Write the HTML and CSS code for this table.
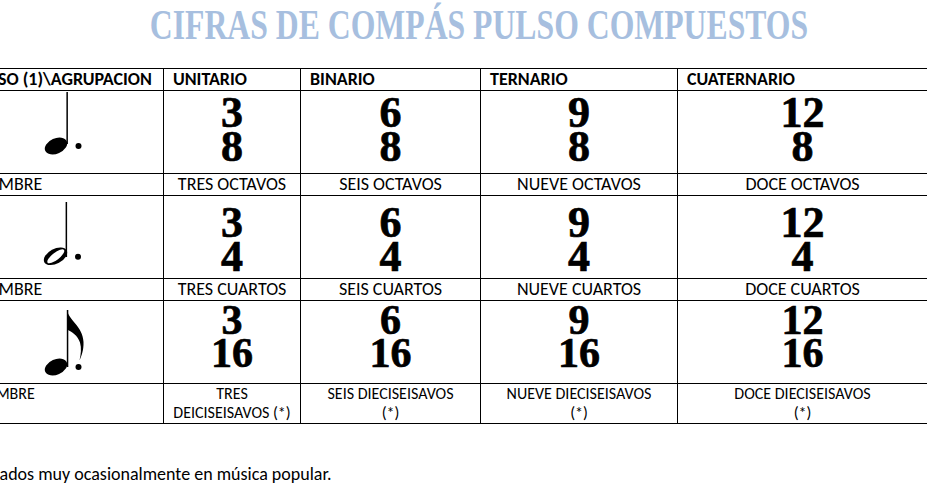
FILE: index.html
```html
<!DOCTYPE html>
<html lang="es">
<head>
<meta charset="utf-8">
<title>Cifras de compás pulso compuestos</title>
<link rel="stylesheet" href="styles.css">
</head>
<body>
<div class="title-bar"><h1 class="title">CIFRAS DE COMPÁS PULSO COMPUESTOS</h1></div>
<table class="grid">
  <colgroup>
    <col class="c1"><col class="c2"><col class="c3"><col class="c4"><col class="c5">
  </colgroup>
  <tr class="head">
    <th>PULSO (1)\AGRUPACION</th>
    <th>UNITARIO</th>
    <th>BINARIO</th>
    <th>TERNARIO</th>
    <th>CUATERNARIO</th>
  </tr>
  <tr class="pic r1">
    <td class="note">
      <svg viewBox="-35 0 198 82" width="198" height="82">
        <rect x="65.4" y="1" width="1.5" height="52"/>
        <ellipse cx="55" cy="55" rx="11.8" ry="7.6" transform="rotate(-24 55 55)"/>
        <circle cx="77.5" cy="55" r="3"/>
      </svg>
    </td>
    <td><div class="ts"><div>3</div><div>8</div></div></td>
    <td><div class="ts"><div>6</div><div>8</div></div></td>
    <td><div class="ts"><div>9</div><div>8</div></div></td>
    <td><div class="ts"><div>12</div><div>8</div></div></td>
  </tr>
  <tr class="lbl">
    <td class="first">NOMBRE</td>
    <td>TRES OCTAVOS</td>
    <td>SEIS OCTAVOS</td>
    <td>NUEVE OCTAVOS</td>
    <td>DOCE OCTAVOS</td>
  </tr>
  <tr class="pic r2">
    <td class="note">
      <svg viewBox="-35 0 198 82" width="198" height="82">
        <rect x="64.6" y="6" width="1.5" height="55"/>
        <ellipse cx="54.5" cy="60.3" rx="12.6" ry="7.4" transform="rotate(-28 54.5 60.3)"/>
        <ellipse cx="54.8" cy="60.3" rx="10.4" ry="3.6" transform="rotate(-38 54.8 60.3)" fill="#fff"/>
        <circle cx="77" cy="60.7" r="3"/>
      </svg>
    </td>
    <td><div class="ts"><div>3</div><div>4</div></div></td>
    <td><div class="ts"><div>6</div><div>4</div></div></td>
    <td><div class="ts"><div>9</div><div>4</div></div></td>
    <td><div class="ts"><div>12</div><div>4</div></div></td>
  </tr>
  <tr class="lbl">
    <td class="first">NOMBRE</td>
    <td>TRES CUARTOS</td>
    <td>SEIS CUARTOS</td>
    <td>NUEVE CUARTOS</td>
    <td>DOCE CUARTOS</td>
  </tr>
  <tr class="pic r3">
    <td class="note">
      <svg viewBox="-35 0 198 82" width="198" height="82">
        <rect x="65.8" y="9" width="1.5" height="57"/>
        <path d="M66 8.5 C67 19 82 25 82.5 41 C82.8 49 80.6 55 78.5 59.5 C80 53 80.6 47 79 41.5 C76.5 34 71 31 66 28.5 Z"/>
        <ellipse cx="55" cy="66" rx="11.8" ry="7.6" transform="rotate(-24 55 66)"/>
        <circle cx="77.5" cy="66" r="3"/>
      </svg>
    </td>
    <td><div class="ts"><div>3</div><div>16</div></div></td>
    <td><div class="ts"><div>6</div><div>16</div></div></td>
    <td><div class="ts"><div>9</div><div>16</div></div></td>
    <td><div class="ts"><div>12</div><div>16</div></div></td>
  </tr>
  <tr class="lbl last">
    <td class="first">NOMBRE</td>
    <td>TRES<br>DEICISEISAVOS (*)</td>
    <td>SEIS DIECISEISAVOS<br>(*)</td>
    <td>NUEVE DIECISEISAVOS<br>(*)</td>
    <td>DOCE DIECISEISAVOS<br>(*)</td>
  </tr>
</table>
<p class="footnote">(*) Usados muy ocasionalmente en música popular.</p>
</body>
</html>
```
FILE: styles.css
```css
html, body {
  margin: 0;
  padding: 0;
  background: #fff;
  overflow: hidden;
}
body {
  width: 927px;
  height: 487px;
  font-family: "Carlito", "Open Sans", sans-serif;
  color: #000;
}
.title-bar {
  height: 68px;
  display: flex;
  justify-content: center;
  padding-left: 31px;
}
.title {
  margin: 0;
  font-family: "Liberation Serif", serif;
  font-weight: bold;
  font-size: 42px;
  line-height: 50px;
  color: #a7bfdf;
  white-space: nowrap;
  transform: scaleX(0.755);
  transform-origin: center top;
}
.grid {
  border-collapse: collapse;
  table-layout: fixed;
  width: 962px;
  margin-left: -35px;
}
.c1 { width: 198px; }
.c2 { width: 137px; }
.c3 { width: 180px; }
.c4 { width: 197px; }
.c5 { width: 250px; }
.grid th, .grid td {
  border: 1px solid #000;
  padding: 0;
}
.head th {
  height: 21px;
  font-weight: bold;
  font-size: 18px;
  line-height: 21px;
  text-align: left;
  padding: 0 8px 0 9px;
  white-space: nowrap;
  vertical-align: middle;
}
.head th:first-child {
  padding-left: 3px;
}
.pic td {
  height: 82px;
  vertical-align: top;
  text-align: center;
}
.note svg {
  display: block;
}
.ts {
  font-family: "Liberation Serif", serif;
  font-weight: bold;
  font-size: 44px;
  line-height: 34px;
  -webkit-text-stroke: 0.7px #000;
}
.r1 .ts { padding-top: 5px; }
.r2 .ts { padding-top: 10px; }
.r3 .ts { padding-top: 3px; font-size: 42px; line-height: 33px; }
.lbl td {
  height: 21px;
  font-size: 18px;
  line-height: 21px;
  text-align: center;
  vertical-align: middle;
  white-space: nowrap;
}
.lbl td.first {
  text-align: left;
  padding: 0 9px;
}
.lbl.last td {
  height: 39px;
  font-size: 16px;
  line-height: 19px;
  vertical-align: top;
}
.footnote {
  margin: 40px 0 0 -43px;
  font-size: 18px;
  line-height: 21px;
  white-space: nowrap;
}
```
